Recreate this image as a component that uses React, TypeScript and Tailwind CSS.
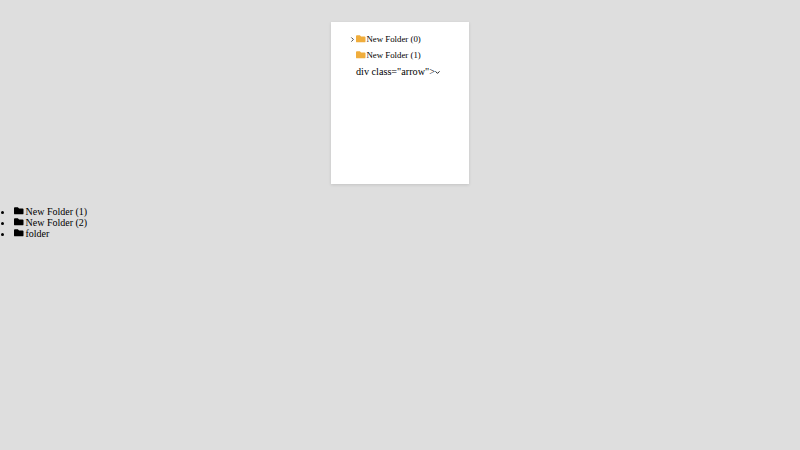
import { ChevronDown, ChevronRight } from "lucide-react"
import { FaFolder } from "react-icons/fa"

function FolderRow({ name, arrow }: { name: string; arrow?: boolean }) {
  return (
    <div className="flex h-[16px] items-center text-[8.8px] leading-none">
      <span className="flex w-[6px] items-center">
        {arrow && <ChevronRight className="ml-[-1px] h-[7px] w-[7px]" strokeWidth={2.5} />}
      </span>
      <FaFolder className="mb-[1px] h-[9.5px] w-[9.5px] text-[#f0ad3c]" />
      <span className="ml-[1px]">{name}</span>
    </div>
  )
}

function ListRow({ name }: { name: string }) {
  return (
    <li>
      <span className="flex items-center">
        <FaFolder className="mb-[1px] mr-[2px] h-[9.5px] w-[9.5px]" />
        {name}
      </span>
    </li>
  )
}

export default function App() {
  return (
    <div className="min-h-[450px] bg-[#dedede] font-['Liberation_Serif',serif] text-black">
      <div className="pt-[22px]">
        <div className="mx-auto h-[162px] w-[138px] bg-white pl-[19px] pt-[9px] shadow-[0_1px_3px_rgba(0,0,0,0.12)]">
          <FolderRow name="New Folder (0)" arrow />
          <FolderRow name="New Folder (1)" />
          <div className="mt-[2.5px] flex h-[14px] items-center pl-[6px] text-[10.2px] leading-none">
            div class="arrow"&gt;
            <ChevronDown className="ml-[-0.5px] h-[7px] w-[7px]" strokeWidth={3} />
          </div>
        </div>
      </div>
      <ul className="mt-[22px] list-disc pl-[14px] text-[10px] leading-[11px]">
        <ListRow name="New Folder (1)" />
        <ListRow name="New Folder (2)" />
        <ListRow name="folder" />
      </ul>
    </div>
  )
}
